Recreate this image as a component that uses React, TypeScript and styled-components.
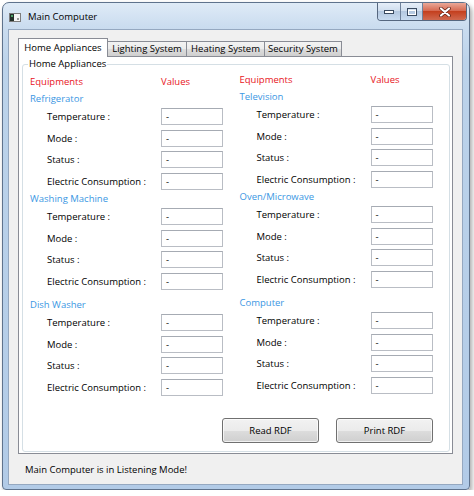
import * as React from "react";
import styled, {createGlobalStyle, css} from "styled-components";

const GlobalStyle = createGlobalStyle`
  html, body {
    margin: 0;
    padding: 0;
    background: #ffffff;
  }

  body {
    font-family: "Segoe UI", "Open Sans", sans-serif;
    font-size: 9.5px;
    color: #000000;
  }
`

const Window = styled.div`
  margin: 2px 0 0 2px;
  width: 468px;
  height: 488px;
  box-sizing: border-box;
  border: 1px solid #5f738d;
  border-radius: 7px 7px 4px 4px;
  background: linear-gradient(to bottom, #dfebf7 0px, #cadcef 24px, #bcd3ea 60px, #b2cbe7 100%);
  box-shadow: 2px 3px 5px rgba(0, 0, 0, 0.35);
  display: flex;
  flex-direction: column;
`

const TitleBar = styled.div`
  height: 26px;
  display: flex;
  align-items: flex-start;
  padding: 0 2px 0 6px;
`

const AppIcon = styled.svg`
  margin-top: 10px;
  flex-shrink: 0;
`

const Title = styled.div`
  margin: 7px 0 0 7px;
  line-height: 14px;
  flex: 1;
`

const Controls = styled.div`
  display: flex;
  height: 17px;
  border: 1px solid #56677f;
  border-top: none;
  border-radius: 0 0 4px 4px;
  overflow: hidden;
`

const ControlButton = styled.div<{ close?: boolean, w: number }>`
  width: ${({w}) => w}px;
  display: flex;
  align-items: center;
  justify-content: center;
  background: linear-gradient(to bottom, #e6eef8 0%, #d0deee 45%, #b4c8e0 50%, #c8dbf0 100%);
  & + & {
    border-left: 1px solid #6f819a;
  }
  ${({close}) => close && css`
    background: linear-gradient(to bottom, #e9a898 0%, #d66a52 45%, #c4401f 50%, #d0694f 100%);
  `}
`

const Client = styled.div`
  margin: 0 6px 0 5px;
  height: 456px;
  box-sizing: border-box;
  border: 1px solid #95a8c0;
  background: #f0f0f0;
  padding: 8px 9px 0 9px;
  display: flex;
  flex-direction: column;
`

const TabStrip = styled.div`
  height: 18px;
  display: flex;
  align-items: flex-end;
`

const Tab = styled.div<{ active?: boolean, w: number }>`
  width: ${({w}) => w}px;
  box-sizing: border-box;
  height: 15px;
  line-height: 14px;
  text-align: center;
  border: 1px solid #898c95;
  border-bottom: none;
  margin-left: -1px;
  background: linear-gradient(to bottom, #f3f3f3 0%, #ebebeb 50%, #dddddd 50%, #cfcfcf 100%);
  white-space: nowrap;
  ${({active}) => active && css`
    height: 19px;
    line-height: 18px;
    margin-left: 0;
    margin-bottom: -1px;
    position: relative;
    z-index: 1;
    background: #ffffff;
  `}
`

const Panel = styled.div`
  border: 1px solid #898c95;
  background: #ffffff;
  padding: 0 2px 1px 3px;
`

const GroupBox = styled.fieldset`
  margin: 0;
  min-width: 0;
  border: 1px solid #d5dfe5;
  border-radius: 3px;
  padding: 0 0 8px 7px;
`

const GroupHeader = styled.legend`
  padding: 0 1px;
  margin-left: -2px;
  line-height: 14px;
  font-size: 9.5px;
`

const Columns = styled.div`
  display: flex;
`

const Column = styled.div<{ top: number }>`
  width: 211px;
  padding-top: ${({top}) => top}px;
`

const Heading = styled.div`
  display: flex;
  line-height: 18px;
  margin-bottom: 1px;
  color: #e8141c;
`

const HeadingCell = styled.div`
  width: 131px;
`

const Block = styled.div<{ spaced?: boolean }>`
  ${({spaced}) => spaced && css`margin-top: 6px;`}
`

const BlockTitle = styled.div`
  line-height: 14px;
  color: #3b97e3;
`

const FieldRow = styled.div`
  height: 21.5px;
  display: flex;
  align-items: center;
`

const FieldLabel = styled.div`
  width: 131px;
  box-sizing: border-box;
  padding-left: 17px;
  white-space: nowrap;
`

const TextBox = styled.div`
  width: 62px;
  height: 17px;
  box-sizing: border-box;
  border: 1px solid #b9bdc4;
  border-top-color: #a6abb3;
  padding-left: 4px;
  line-height: 15px;
  background: #ffffff;
`

const ButtonRow = styled.div`
  display: flex;
  justify-content: flex-end;
  gap: 17px;
  margin-top: 20px;
  padding-right: 16px;
`

const Button = styled.div`
  width: 97px;
  height: 25px;
  box-sizing: border-box;
  border: 1px solid #707070;
  border-radius: 3px;
  background: linear-gradient(to bottom, #f2f2f2 0%, #ebebeb 50%, #dddddd 50%, #cfcfcf 100%);
  box-shadow: inset 0 0 0 1px rgba(255, 255, 255, 0.7);
  display: flex;
  align-items: center;
  justify-content: center;
`

const StatusText = styled.div`
  margin-top: 9px;
  padding-left: 7px;
  line-height: 14px;
`

const fields = ["Temperature :", "Mode :", "Status :", "Electric Consumption :"];

const columns = [
    {top: 2, items: ["Refrigerator", "Washing Machine", "Dish Washer"]},
    {top: 0, items: ["Television", "Oven/Microwave", "Computer"]},
];

const tabs = [
    {name: "Home Appliances", w: 90, active: true},
    {name: "Lighting System", w: 80},
    {name: "Heating System", w: 79},
    {name: "Security System", w: 78},
];

export default function App() {
    return <>
        <GlobalStyle/>
        <Window>
            <TitleBar>
                <AppIcon width={12} height={9} viewBox="0 0 12 9">
                    <rect x={0.5} y={0.5} width={11} height={8} fill="#f6f6f6" stroke="#7d7d7d"/>
                    <rect x={1} y={1} width={4} height={7} fill="#24302a"/>
                    <rect x={2} y={2} width={2} height={2} fill="#4fa36a"/>
                    <rect x={8} y={5} width={2} height={2} fill="#9a9a9a"/>
                </AppIcon>
                <Title>Main Computer</Title>
                <Controls>
                    <ControlButton w={22}>
                        <svg width={11} height={5} viewBox="0 0 11 5">
                            <rect x={0.5} y={1.5} width={9} height={3} fill="#ffffff" stroke="#3a4a60"/>
                        </svg>
                    </ControlButton>
                    <ControlButton w={21}>
                        <svg width={10} height={8} viewBox="0 0 10 8">
                            <rect x={0.5} y={0.5} width={9} height={7} fill="none" stroke="#3a4a60"/>
                            <rect x={1.5} y={2.5} width={7} height={4} fill="none" stroke="#ffffff"/>
                        </svg>
                    </ControlButton>
                    <ControlButton w={43} close>
                        <svg width={12} height={10} viewBox="0 0 12 10">
                            <path d="M2 1.5 L10 8.5 M10 1.5 L2 8.5" stroke="#5a1c10" strokeWidth={3.6} strokeLinecap="round"/>
                            <path d="M2 1.5 L10 8.5 M10 1.5 L2 8.5" stroke="#ffffff" strokeWidth={2.2} strokeLinecap="round"/>
                        </svg>
                    </ControlButton>
                </Controls>
            </TitleBar>
            <Client>
                <TabStrip>
                    {tabs.map(tab => <Tab key={tab.name} w={tab.w} active={tab.active}>{tab.name}</Tab>)}
                </TabStrip>
                <Panel>
                    <GroupBox>
                        <GroupHeader>Home Appliances</GroupHeader>
                        <Columns>
                            {columns.map((column, ci) => <Column key={ci} top={column.top}>
                                <Heading>
                                    <HeadingCell>Equipments</HeadingCell>
                                    <div>Values</div>
                                </Heading>
                                {column.items.map((item, i) => <Block key={item} spaced={i == 2}>
                                    <BlockTitle>{item}</BlockTitle>
                                    {fields.map(field => <FieldRow key={field}>
                                        <FieldLabel>{field}</FieldLabel>
                                        <TextBox>-</TextBox>
                                    </FieldRow>)}
                                </Block>)}
                            </Column>)}
                        </Columns>
                        <ButtonRow>
                            <Button>Read RDF</Button>
                            <Button>Print RDF</Button>
                        </ButtonRow>
                    </GroupBox>
                </Panel>
                <StatusText>Main Computer is in Listening Mode!</StatusText>
            </Client>
        </Window>
    </>
}
